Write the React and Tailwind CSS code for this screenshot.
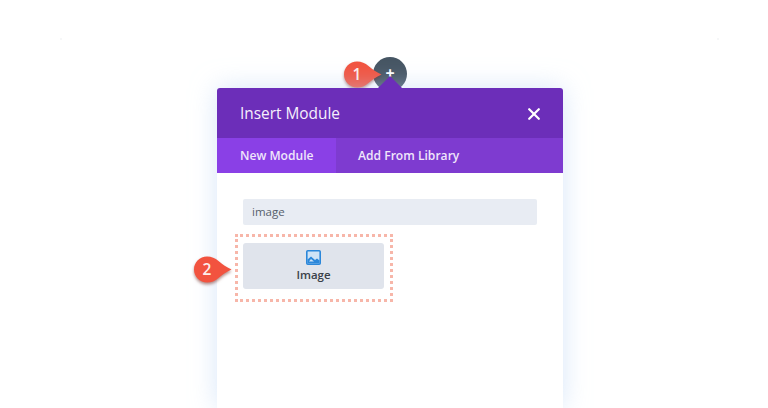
import React from 'react';

const font = { fontFamily: '"Open Sans", sans-serif' };

// red speech-bubble marker with a number
const Marker = ({ n, className }) => (
  <div className={`absolute w-[42px] h-[32px] ${className}`}>
    <svg width="42" height="32" viewBox="0 0 42 32" className="absolute inset-0 drop-shadow-[0_2px_1.5px_rgba(110,30,20,0.5)]">
      <path d="M15 1.5C19.5 1.5 23 3 26.5 6C30 9 34 12 39.5 14.5C34 17 30 20 26.5 23C23 26 19.5 27.5 15 27.5C7.8 27.5 2 21.7 2 14.5C2 7.3 7.8 1.5 15 1.5Z" fill="#f2533f" />
    </svg>
    <span className="absolute left-[2px] top-[1.5px] w-[26px] h-[26px] flex items-center justify-center text-[#fdeeea] text-[15.5px] font-semibold">{n}</span>
  </div>
);

const App = () => {
  return (
    <div style={font} className="relative w-[768px] h-[408px] bg-white overflow-hidden flex flex-col items-center">
      {/* faint dots from the page behind */}
      <div className="absolute left-[60px] top-[38px] w-[2px] h-[2px] rounded-full bg-gray-100"></div>
      <div className="absolute left-[717px] top-[38px] w-[2px] h-[2px] rounded-full bg-gray-100"></div>

      {/* add button */}
      <div className="absolute left-[373px] top-[57px] w-[34px] h-[34px] rounded-full bg-[#465563] flex items-start justify-center pt-[8px] text-white text-[16px] leading-[17px] font-bold">+</div>
      <Marker n="1" className="left-[342px] top-[60px]" />

      <div className="relative w-[346px] flex-1 mt-[88px] ml-[12px] bg-white rounded-t-[3px] shadow-[0_0_26px_rgba(190,215,245,0.6)]">
        {/* little arrow on top of the modal */}
        <div className="absolute left-[161px] top-[-12px] w-0 h-0 border-x-[12px] border-x-transparent border-b-[12px] border-b-[#6c2eb9]"></div>

        <div className="h-[50px] pt-[1px] bg-[#6c2eb9] rounded-t-[3px] flex items-center justify-between px-[23px]">
          <span className="text-[#f6f0fc] text-[15.4px] font-medium">Insert Module</span>
          <svg width="12" height="12" viewBox="0 0 12 12">
            <path d="M1.2 1.2L10.8 10.8M10.8 1.2L1.2 10.8" stroke="#ffffff" strokeWidth="2.2" strokeLinecap="round" />
          </svg>
        </div>

        <div className="h-[35px] bg-[#7e3bd0] flex text-[#f0e6fb] text-[12.1px] font-semibold">
          <div className="w-[119px] pt-[1px] bg-[#8a40e6] flex items-center pl-[23px]">New Module</div>
          <div className="pt-[1px] flex items-center pl-[22px]">Add From Library</div>
        </div>

        <div className="pt-[26px] px-[26px]">
          <div className="h-[26px] bg-[#e8ecf3] rounded-[2px] flex items-center pl-[9px] text-[11.5px] font-medium text-[#56606c]">image</div>

          {/* dotted highlight around the result */}
          <div className="mt-[9px] ml-[-8px] w-[158px] h-[68px] border-[3px] border-dotted border-[#f7b6a9] pl-[5px] pt-[6px]">
            <div className="w-[141px] h-[46px] bg-[#e0e4ec] rounded-[3px] flex flex-col items-center pt-[7px]">
              <svg width="15" height="15" viewBox="0 0 15 15">
                <rect x="0.8" y="0.8" width="13.4" height="13.4" rx="1" fill="#cfe3f6" stroke="#2b87da" strokeWidth="1.6" />
                <path d="M1.5 9.5L5 6.5L9 10L11 8.5L13.5 10.5V13.5H1.5Z" fill="#2b87da" />
                <path d="M5 9L8 11.5H3Z" fill="#cfe3f6" />
              </svg>
              <span className="mt-[2px] text-[11.5px] leading-[16px] font-semibold text-[#3a4149]">Image</span>
            </div>
          </div>
        </div>
      </div>

      <Marker n="2" className="left-[192px] top-[255px]" />
    </div>
  );
};

export default App;
